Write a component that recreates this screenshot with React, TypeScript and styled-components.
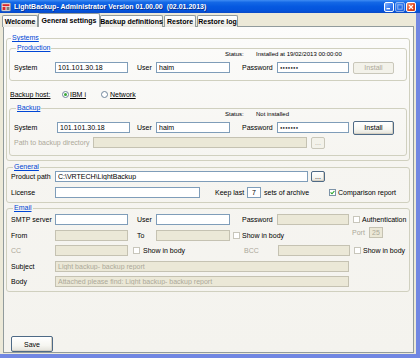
import React from "react";
import styled, { createGlobalStyle, css } from "styled-components";

const GlobalStyle = createGlobalStyle`
  html, body {
    margin: 0;
    padding: 0;
    background: #ffffff;
  }
  body {
    font-family: "Liberation Sans", Arial, sans-serif;
    font-size: 7px;
    color: #000;
  }
  * {
    box-sizing: border-box;
  }
`;

const Window = styled.div`
  width: 420px;
  height: 358px;
  display: flex;
  flex-direction: column;
  overflow: hidden;
  background: #ece9d8;
`;

const TitleBar = styled.div`
  height: 13px;
  flex: none;
  display: flex;
  align-items: center;
  padding: 0 4px 0 1px;
  background: linear-gradient(180deg, #3f8cf3 0%, #1468e6 18%, #0659e0 50%, #0453db 82%, #0b4ac6 100%);
`;

const AppIcon = styled.svg`
  width: 10px;
  height: 10px;
  flex: none;
`;

const Title = styled.span`
  margin-left: 3px;
  color: #fff;
  font-weight: bold;
  font-size: 7px;
  white-space: nowrap;
  text-shadow: 1px 1px 0 #0a2f8a;
  flex: 1;
`;

const Caption = styled.div<{ $close?: boolean; $faded?: boolean }>`
  width: 10px;
  height: 10px;
  margin-left: 1px;
  border: 1px solid #fff;
  border-radius: 2px;
  display: flex;
  align-items: center;
  justify-content: center;
  background: ${(p) =>
    p.$close
      ? "linear-gradient(135deg, #f29a7a, #e0461c 60%, #c73a10)"
      : "linear-gradient(135deg, #7fb0ff, #3579f0 60%, #2a63d8)"};
  opacity: ${(p) => (p.$faded ? 0.55 : 1)};
`;

const Body = styled.div`
  flex: 1;
  display: flex;
  flex-direction: column;
  padding-top: 1px;
  border-right: 4px solid #7187e2;
  border-bottom: 4px solid #7187e2;
  min-height: 0;
`;

const TabStrip = styled.div`
  display: flex;
  align-items: flex-end;
  height: 13px;
  margin-left: 2px;
  margin-bottom: -1px;
  position: relative;
  z-index: 1;
`;

const Tab = styled.div<{ $w: number; $active?: boolean }>`
  width: ${(p) => p.$w}px;
  flex: none;
  height: ${(p) => (p.$active ? 14 : 12)}px;
  margin-right: ${(p) => (p.$active ? 0 : 1)}px;
  display: flex;
  align-items: center;
  justify-content: center;
  font-weight: bold;
  font-size: 7px;
  white-space: nowrap;
  border: 1px solid #919b9c;
  border-bottom: none;
  border-radius: 2px 2px 0 0;
  ${(p) =>
    p.$active
      ? css`
          background: #fcfcfe;
          margin-left: -1px;
          margin-right: 0;
        `
      : css`
          background: linear-gradient(180deg, #ffffff 0%, #f5f5f2 60%, #e9e8e1 100%);
          margin-top: 1px;
        `}
`;

const Page = styled.div`
  flex: 1;
  margin: 0 2px 1px 3px;
  border: 1px solid #919b9c;
  padding: 6px 3px 0 2px;
  display: flex;
  flex-direction: column;
  background: linear-gradient(180deg, #fcfcfb 0%, #f6f5f1 40%, #f4f3ee 100%);
`;

const Group = styled.fieldset<{ $pad: string; $mt?: number }>`
  margin: ${(p) => p.$mt ?? 0}px 0 0 0;
  padding: ${(p) => p.$pad};
  min-width: 0;
  border: 1px solid #d0d0bf;
  border-radius: 3px;
`;

const Legend = styled.legend`
  margin-left: 2px;
  padding: 0 1px;
  line-height: 10px;
  font-size: 7px;
  color: #0046d5;
  text-decoration: underline;
`;

const Stack = styled.div<{ $gap: number }>`
  display: flex;
  flex-direction: column;
  gap: ${(p) => p.$gap}px;
`;

const StatusLine = styled.div`
  display: flex;
  height: 9px;
  line-height: 9px;
  margin-top: -4px;
  padding-left: 211px;
  font-size: 6px;
  white-space: nowrap;
`;

const Row = styled.div<{ $mt?: number; $ml?: number }>`
  display: flex;
  align-items: center;
  height: 11px;
  margin-top: ${(p) => p.$mt ?? 0}px;
  margin-left: ${(p) => p.$ml ?? 0}px;
`;

const Label = styled.span<{ $w?: number; $ml?: number; $muted?: boolean; $link?: boolean }>`
  flex: none;
  ${(p) => (p.$w ? `width: ${p.$w}px;` : "")}
  margin-left: ${(p) => p.$ml ?? 0}px;
  line-height: 11px;
  white-space: nowrap;
  color: ${(p) => (p.$muted ? "#aca899" : "#000")};
  text-decoration: ${(p) => (p.$link ? "underline" : "none")};
`;

const Field = styled.input<{ $w: number; $ml?: number; $center?: boolean }>`
  flex: none;
  width: ${(p) => p.$w}px;
  height: 11px;
  margin: 0 0 0 ${(p) => p.$ml ?? 0}px;
  padding: 0 2px;
  font-family: "Liberation Sans", Arial, sans-serif;
  font-size: 7px;
  line-height: 9px;
  color: #000;
  text-align: ${(p) => (p.$center ? "center" : "left")};
  background: #fff;
  border: 1px solid #7f9db9;
  border-radius: 0;
  outline: none;
  &:disabled {
    background: #ebe8d7;
    border-color: #c5c2b2;
    color: #aca899;
  }
`;

const Secret = styled.span<{ $w: number; $ml?: number }>`
  flex: none;
  width: ${(p) => p.$w}px;
  height: 11px;
  margin-left: ${(p) => p.$ml ?? 0}px;
  padding: 0 2px;
  background: #fff;
  border: 1px solid #7f9db9;
  font-size: 4px;
  line-height: 9px;
  letter-spacing: 0.2px;
  color: #111;
  white-space: nowrap;
  overflow: hidden;
`;

const Button = styled.button<{ $w: number; $h: number; $ml?: number }>`
  flex: none;
  width: ${(p) => p.$w}px;
  height: ${(p) => p.$h}px;
  margin: 0 0 0 ${(p) => p.$ml ?? 0}px;
  padding: 0;
  font-family: "Liberation Sans", Arial, sans-serif;
  font-size: 7px;
  line-height: 1;
  color: #000;
  border: 1px solid #4e6a86;
  border-radius: 2px;
  background: linear-gradient(180deg, #ffffff 0%, #f6f6f1 60%, #e3e2da 100%);
  box-shadow: inset -1px -1px 0 #d6d0c2;
  &:disabled {
    color: #aca899;
    border-color: #c9c7ba;
    background: #f3f2ea;
    box-shadow: none;
  }
`;

const Check = styled.span<{ $ml?: number; $muted?: boolean }>`
  flex: none;
  width: 7px;
  height: 7px;
  margin-left: ${(p) => p.$ml ?? 0}px;
  border: 1px solid ${(p) => (p.$muted ? "#c8c6bb" : "#7d93a8")};
  background: #fff;
  display: flex;
  align-items: center;
  justify-content: center;
`;

const Radio = styled.span<{ $ml?: number; $on?: boolean }>`
  flex: none;
  width: 7px;
  height: 7px;
  margin-left: ${(p) => p.$ml ?? 0}px;
  border: 1px solid #6f869c;
  border-radius: 50%;
  background: #fff;
  display: flex;
  align-items: center;
  justify-content: center;
  &::after {
    content: "";
    width: 3px;
    height: 3px;
    border-radius: 50%;
    background: ${(p) => (p.$on ? "#3aa83a" : "transparent")};
  }
`;

const PortGroup = styled.div`
  display: flex;
  align-items: center;
  margin-top: -6px;
`;

const SaveBar = styled.div`
  margin-top: auto;
  padding: 0 0 0 5px;
`;

const Tick = () => (
  <svg width="5" height="5" viewBox="0 0 5 5">
    <path d="M0.6 2.4 L2 3.8 L4.4 1" fill="none" stroke="#21a121" strokeWidth="1.1" />
  </svg>
);

export default function App() {
  return (
    <>
      <GlobalStyle />
      <Window>
        <TitleBar>
          <AppIcon viewBox="0 0 10 10">
            <rect x="0.5" y="1" width="9" height="8" rx="1" fill="#f0f0f0" stroke="#8a8a8a" strokeWidth="0.6" />
            <rect x="1.5" y="2.2" width="7" height="2" fill="#d8262a" />
            <rect x="1.5" y="5" width="3" height="3" fill="#d8262a" />
            <rect x="5.5" y="5" width="3" height="3" fill="#7a7a7a" />
          </AppIcon>
          <Title>LightBackup- Administrator Version 01.00.00{"\u00a0"} (02.01.2013)</Title>
          <Caption>
            <svg width="6" height="6" viewBox="0 0 6 6">
              <rect x="0.5" y="4" width="3.5" height="1.3" fill="#fff" />
            </svg>
          </Caption>
          <Caption $faded>
            <svg width="6" height="6" viewBox="0 0 6 6">
              <rect x="0.8" y="0.8" width="4.4" height="4.4" fill="none" stroke="#fff" strokeWidth="1" />
            </svg>
          </Caption>
          <Caption $close>
            <svg width="6" height="6" viewBox="0 0 6 6">
              <path d="M1 1 L5 5 M5 1 L1 5" stroke="#fff" strokeWidth="1.2" />
            </svg>
          </Caption>
        </TitleBar>
        <Body>
          <TabStrip>
            <Tab $w={36}>Welcome</Tab>
            <Tab $w={62} $active>General settings</Tab>
            <Tab $w={63}>Backup definitions</Tab>
            <Tab $w={32}>Restore</Tab>
            <Tab $w={41}>Restore log</Tab>
          </TabStrip>
          <Page>
            <Group $pad="0 2px 4px 2px">
              <Legend>Systems</Legend>
              <Group $pad="0 4px 7px 4px">
                <Legend>Production</Legend>
                <StatusLine>
                  <Label $w={31}>Status:</Label>
                  <Label>Installed at 19/02/2013 00:00:00</Label>
                </StatusLine>
                <Row $mt={4}>
                  <Label $w={41}>System</Label>
                  <Field $w={73} readOnly defaultValue="101.101.30.18" />
                  <Label $w={19} $ml={9}>User</Label>
                  <Field $w={74} readOnly defaultValue="haim" />
                  <Label $w={35} $ml={12}>Password</Label>
                  <Secret $w={72}>●●●●●●●</Secret>
                  <Button $w={41} $h={12} $ml={4} disabled>Install</Button>
                </Row>
              </Group>
              <Row $mt={8} $ml={1}>
                <Label $w={52} $link>Backup host:</Label>
                <Radio $on />
                <Label $ml={1} $link>IBM i</Label>
                <Radio $ml={15} />
                <Label $ml={2} $link>Network</Label>
              </Row>
              <Group $pad="0 4px 7px 4px" $mt={3}>
                <Legend>Backup</Legend>
                <StatusLine>
                  <Label $w={31}>Status:</Label>
                  <Label>Not installed</Label>
                </StatusLine>
                <Row $mt={4}>
                  <Label $w={43}>System</Label>
                  <Field $w={73} readOnly defaultValue="101.101.30.18" />
                  <Label $w={19} $ml={7}>User</Label>
                  <Field $w={74} readOnly defaultValue="haim" />
                  <Label $w={35} $ml={12}>Password</Label>
                  <Secret $w={72}>●●●●●●●</Secret>
                  <Button $w={41} $h={14} $ml={4}>Install</Button>
                </Row>
                <Row $mt={4}>
                  <Label $w={79} $muted>Path to backup directory</Label>
                  <Field $w={214} disabled defaultValue="" />
                  <Button $w={14} $h={12} $ml={4} disabled>...</Button>
                </Row>
              </Group>
            </Group>

            <Group $pad="0 4px 4px 4px" $mt={1}>
              <Legend>General</Legend>
              <Row $mt={-1}>
                <Label $w={44}>Product path</Label>
                <Field $w={253} readOnly defaultValue="C:\VRTECH\LightBackup" />
                <Button $w={14} $h={11} $ml={3}>...</Button>
              </Row>
              <Row $mt={5}>
                <Label $w={44}>License</Label>
                <Field $w={145} readOnly defaultValue="" />
                <Label $w={32} $ml={15}>Keep last</Label>
                <Field $w={14} readOnly $center defaultValue="7" />
                <Label $w={65} $ml={3}>sets of archive</Label>
                <Check>
                  <Tick />
                </Check>
                <Label $ml={2}>Comparison report</Label>
              </Row>
            </Group>

            <Group $pad="0 4px 4px 4px">
              <Legend>Email</Legend>
              <Stack $gap={4.5}>
                <Row $mt={1}>
                  <Label $w={44}>SMTP server</Label>
                  <Field $w={73} readOnly defaultValue="" />
                  <Label $w={19} $ml={9}>User</Label>
                  <Field $w={74} readOnly defaultValue="" />
                  <Label $w={35} $ml={12}>Password</Label>
                  <Field $w={72} disabled defaultValue="" />
                  <Check $ml={4} $muted />
                  <Label $ml={2}>Authentication</Label>
                </Row>
                <Row>
                  <Label $w={44}>From</Label>
                  <Field $w={73} disabled defaultValue="" />
                  <Label $w={19} $ml={9}>To</Label>
                  <Field $w={74} disabled defaultValue="" />
                  <Check $ml={3} $muted />
                  <Label $w={110} $ml={2}>Show in body</Label>
                  <PortGroup>
                    <Label $w={17} $muted>Port</Label>
                    <Field $w={14} disabled defaultValue="25" />
                  </PortGroup>
                </Row>
                <Row>
                  <Label $w={44} $muted>CC</Label>
                  <Field $w={73} disabled defaultValue="" />
                  <Check $ml={5} $muted />
                  <Label $w={101} $ml={3}>Show in body</Label>
                  <Label $w={34} $muted>BCC</Label>
                  <Field $w={72} disabled defaultValue="" />
                  <Check $ml={4} $muted />
                  <Label $ml={2}>Show in body</Label>
                </Row>
                <Row>
                  <Label $w={44}>Subject</Label>
                  <Field $w={294} disabled defaultValue="Light backup- backup report" />
                </Row>
                <Row>
                  <Label $w={44}>Body</Label>
                  <Field $w={294} disabled defaultValue="Attached please find: Light backup- backup report" />
                </Row>
              </Stack>
            </Group>

            <SaveBar>
              <Button $w={42} $h={16}>Save</Button>
            </SaveBar>
          </Page>
        </Body>
      </Window>
    </>
  );
}
